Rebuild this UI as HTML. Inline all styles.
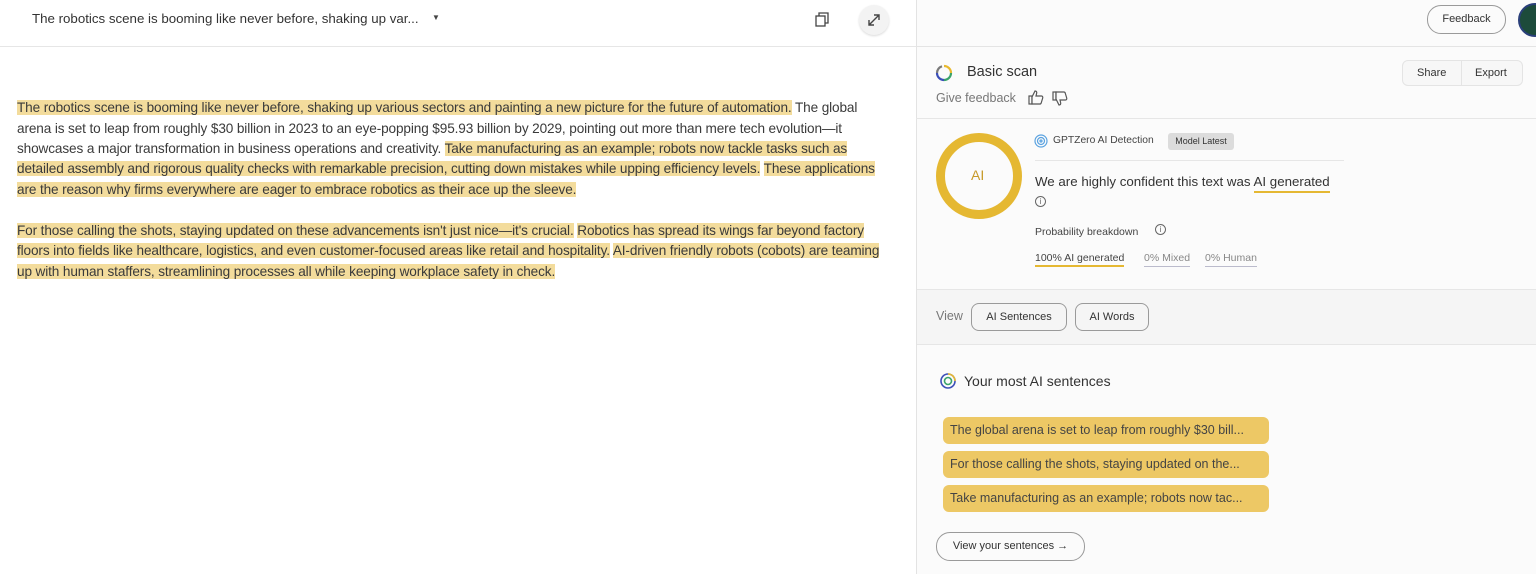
<!DOCTYPE html>
<html><head><meta charset="utf-8"><style>
*{margin:0;padding:0;box-sizing:border-box}
body{width:1536px;height:574px;overflow:hidden;font-family:"Liberation Sans",sans-serif;background:#fff;position:relative;color:#333}
.abs{position:absolute}
.left{left:0;top:0;width:916px;height:574px;background:#fff}
.hdr{left:0;top:0;width:916px;height:47px;border-bottom:1px solid #e6e6e6}
.txt{left:17px;font-size:13.6px;line-height:20.4px;color:#3a3a3a;white-space:nowrap;letter-spacing:-0.12px}
.h{background:#f3dc9c}
.right{left:916px;top:0;width:620px;height:574px;background:#fbfbfb;border-left:1px solid #e3e3e3}
.btn{border:1px solid #9a9a9a;border-radius:14px;font-size:11px;color:#333;text-align:center}
.pill{left:943px;width:326px;height:27px;background:#edc865;border-radius:6px;font-size:12.5px;color:#444;line-height:27px;padding-left:7px;white-space:nowrap}
</style></head><body>
<div class="abs left"></div>
<div class="abs hdr"></div>
<div class="abs" style="left:32px;top:11px;font-size:13.3px;color:#333">The robotics scene is booming like never before, shaking up var...</div>
<div class="abs" style="left:432px;top:13px;font-size:8px;color:#444">▼</div>
<svg class="abs" style="left:813px;top:11px" width="18" height="18" viewBox="0 0 18 18" fill="none" stroke="#444" stroke-width="1.3"><rect x="3" y="5" width="9" height="10"/><path d="M6 5V2h9v10h-3"/></svg>
<div class="abs" style="left:859px;top:5px;width:30px;height:30px;border-radius:50%;background:#f3f3f3;box-shadow:0 1px 2px rgba(0,0,0,.15)"></div>
<svg class="abs" style="left:865px;top:11px" width="18" height="18" viewBox="0 0 18 18" fill="none" stroke="#444" stroke-width="1.4"><path d="M4 14L14 4M9 4h5v5M4 9v5h5"/></svg>

<div class="abs txt" style="top:98px"><span class="h">The robotics scene is booming like never before, shaking up various sectors and painting a new picture for the future of automation.</span> The global</div>
<div class="abs txt" style="top:119px">arena is set to leap from roughly $30 billion in 2023 to an eye-popping $95.93 billion by 2029, pointing out more than mere tech evolution—it</div>
<div class="abs txt" style="top:139px">showcases a major transformation in business operations and creativity. <span class="h">Take manufacturing as an example; robots now tackle tasks such as</span></div>
<div class="abs txt" style="top:159px"><span class="h">detailed assembly and rigorous quality checks with remarkable precision, cutting down mistakes while upping efficiency levels.</span> <span class="h">These applications</span></div>
<div class="abs txt" style="top:180px"><span class="h">are the reason why firms everywhere are eager to embrace robotics as their ace up the sleeve.</span></div>
<div class="abs txt" style="top:221px"><span class="h">For those calling the shots, staying updated on these advancements isn't just nice—it's crucial.</span> <span class="h">Robotics has spread its wings far beyond factory</span></div>
<div class="abs txt" style="top:241px"><span class="h">floors into fields like healthcare, logistics, and even customer-focused areas like retail and hospitality.</span> <span class="h">AI-driven friendly robots (cobots) are teaming</span></div>
<div class="abs txt" style="top:262px"><span class="h">up with human staffers, streamlining processes all while keeping workplace safety in check.</span></div>

<div class="abs right"></div>
<div class="abs" style="left:916px;top:46px;width:620px;border-top:1px solid #e4e4e4"></div>
<div class="abs btn" style="left:1427px;top:5px;width:79px;height:29px;line-height:27px">Feedback</div>
<div class="abs" style="left:1518px;top:3px;width:34px;height:34px;border-radius:50%;background:#1d4b3b;border:2px solid #2a3f7a"></div>

<svg class="abs" style="left:935px;top:64px" width="18" height="18" viewBox="0 0 18 18" fill="none" stroke-width="2.2"><path d="M9 2a7 7 0 0 1 7 7" stroke="#e8b92f"/><path d="M16 9a7 7 0 0 1-7 7" stroke="#3aa36b"/><path d="M9 16a7 7 0 0 1-7-7" stroke="#3b4fb8"/><path d="M2 9a7 7 0 0 1 5-6.7" stroke="#7a7a7a"/></svg>
<div class="abs" style="left:967px;top:64px;font-size:14.5px;color:#333">Basic scan</div>
<div class="abs" style="left:936px;top:91px;font-size:12.5px;color:#777">Give feedback</div>
<svg class="abs" style="left:1028px;top:89px" width="16" height="16" viewBox="0 0 16 16" fill="#fbfbfb" stroke="#555" stroke-width="1.2"><rect x="1" y="7" width="3" height="8"/><path d="M4 8l3-6c1.5 0 2 1 1.6 2.5L8 7h5.5c1 0 1.5 1 1.2 2l-1.5 5c-.2.6-.7 1-1.3 1H4z"/></svg>
<svg class="abs" style="left:1052px;top:91px" width="16" height="16" viewBox="0 0 16 16" fill="#fbfbfb" stroke="#555" stroke-width="1.2" transform="scale(1,-1)"><rect x="1" y="7" width="3" height="8"/><path d="M4 8l3-6c1.5 0 2 1 1.6 2.5L8 7h5.5c1 0 1.5 1 1.2 2l-1.5 5c-.2.6-.7 1-1.3 1H4z"/></svg>
<div class="abs" style="left:1402px;top:60px;width:121px;height:26px;border:1px solid #e4e4e4;border-radius:6px;background:#f7f7f7;font-size:11px;color:#333;line-height:24px"><span style="position:absolute;left:14px">Share</span><span style="position:absolute;left:58px;top:0;height:24px;border-left:1px solid #e4e4e4"></span><span style="position:absolute;left:72px">Export</span></div>
<div class="abs" style="left:916px;top:118px;width:620px;border-top:1px solid #e6e6e6"></div>

<div class="abs" style="left:936px;top:133px;width:86px;height:86px;border-radius:50%;border:9px solid #e5b832"></div>
<div class="abs" style="left:971px;top:167px;font-size:14px;color:#c79a2a">AI</div>
<svg class="abs" style="left:1034px;top:134px" width="14" height="14" viewBox="0 0 14 14" fill="none" stroke="#5aa2e0" stroke-width="1.2"><circle cx="7" cy="7" r="6"/><circle cx="7" cy="7" r="3.5"/><circle cx="7" cy="7" r="1"/></svg>
<div class="abs" style="left:1053px;top:135px;font-size:10.3px;color:#444;white-space:nowrap">GPTZero AI Detection</div>
<div class="abs" style="left:1168px;top:133px;width:66px;height:17px;background:#dcdcdc;border-radius:3px;font-size:9px;color:#333;line-height:17px;text-align:center;white-space:nowrap">Model Latest</div>
<div class="abs" style="left:1035px;top:160px;width:309px;border-top:1px solid #e6e6e6"></div>
<div class="abs" style="left:1035px;top:174px;font-size:13.3px;color:#333;white-space:nowrap">We are <span>highly confident</span> this text was <span style="border-bottom:2px solid #e5b832;padding-bottom:2px">AI generated</span></div>
<div class="abs" style="left:1035px;top:196px;width:11px;height:11px;border:1px solid #666;border-radius:50%;font-size:8px;line-height:9px;text-align:center;color:#666">i</div>
<div class="abs" style="left:1035px;top:226px;font-size:10.5px;color:#444">Probability breakdown</div>
<div class="abs" style="left:1155px;top:224px;width:11px;height:11px;border:1px solid #666;border-radius:50%;font-size:8px;line-height:9px;text-align:center;color:#666">i</div>
<div class="abs" style="left:1035px;top:252px;font-size:10.5px;color:#444;border-bottom:2px solid #e5b832;padding-bottom:1px">100% AI generated</div>
<div class="abs" style="left:1144px;top:252px;font-size:10.5px;color:#888;border-bottom:1px solid #bbc;padding-bottom:2px">0% Mixed</div>
<div class="abs" style="left:1205px;top:252px;font-size:10.5px;color:#888;border-bottom:1px solid #bbc;padding-bottom:2px">0% Human</div>

<div class="abs" style="left:917px;top:289px;width:619px;height:56px;background:#f5f5f5;border-top:1px solid #e6e6e6;border-bottom:1px solid #e6e6e6"></div>
<div class="abs" style="left:936px;top:309px;font-size:12.5px;color:#777">View</div>
<div class="abs btn" style="left:971px;top:303px;width:96px;height:28px;line-height:26px;border-radius:8px">AI Sentences</div>
<div class="abs btn" style="left:1075px;top:303px;width:74px;height:28px;line-height:26px;border-radius:8px">AI Words</div>

<svg class="abs" style="left:939px;top:372px" width="18" height="18" viewBox="0 0 18 18" fill="none" stroke-width="1.6"><circle cx="9" cy="9" r="7" stroke="#3b4fb8"/><path d="M9 2a7 7 0 0 1 7 7" stroke="#e8b92f"/><circle cx="9" cy="9" r="3.5" stroke="#3aa36b"/></svg>
<div class="abs" style="left:964px;top:373px;font-size:14px;color:#333">Your most AI sentences</div>
<div class="abs pill" style="top:417px">The global arena is set to leap from roughly $30 bill...</div>
<div class="abs pill" style="top:451px">For those calling the shots, staying updated on the...</div>
<div class="abs pill" style="top:485px">Take manufacturing as an example; robots now tac...</div>
<div class="abs btn" style="left:936px;top:532px;width:149px;height:29px;line-height:27px">View your sentences →</div>
</body></html>
